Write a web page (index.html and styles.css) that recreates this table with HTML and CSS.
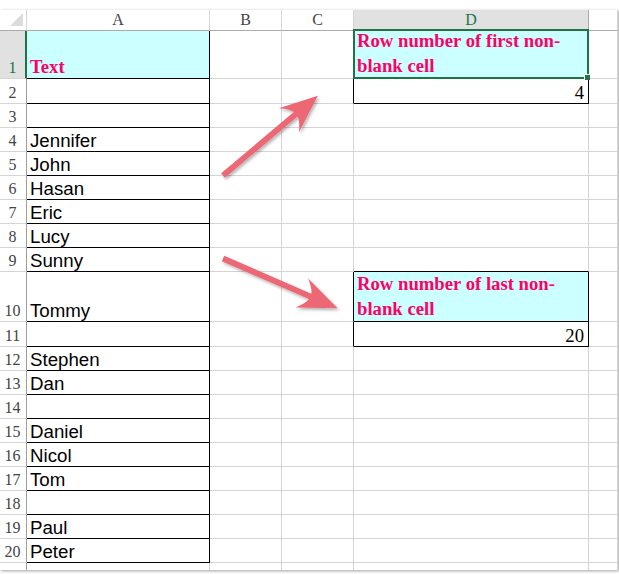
FILE: index.html
```html
<!DOCTYPE html>
<html>
<head>
<meta charset="utf-8">
<link rel="stylesheet" href="styles.css">
</head>
<body>
<div class="frame">
  <div class="sheet">
    <div class="corner"><span class="tri"></span></div>
    <div class="ch">A</div><div class="ch">B</div><div class="ch">C</div><div class="ch sel">D</div><div class="ch"></div>

    <div class="rh sel">1</div><div class="c a a1">Text</div><div class="c"></div><div class="c"></div><div class="c d1 hl">Row number of first non-blank cell<span class="handle"></span></div><div class="c"></div>
    <div class="rh">2</div><div class="c a"></div><div class="c"></div><div class="c bkr"></div><div class="c box num">4</div><div class="c"></div>
    <div class="rh">3</div><div class="c a"></div><div class="c"></div><div class="c"></div><div class="c"></div><div class="c"></div>
    <div class="rh">4</div><div class="c a">Jennifer</div><div class="c"></div><div class="c"></div><div class="c"></div><div class="c"></div>
    <div class="rh">5</div><div class="c a">John</div><div class="c"></div><div class="c"></div><div class="c"></div><div class="c"></div>
    <div class="rh">6</div><div class="c a">Hasan</div><div class="c"></div><div class="c"></div><div class="c"></div><div class="c"></div>
    <div class="rh">7</div><div class="c a">Eric</div><div class="c"></div><div class="c"></div><div class="c"></div><div class="c"></div>
    <div class="rh">8</div><div class="c a">Lucy</div><div class="c"></div><div class="c"></div><div class="c"></div><div class="c"></div>
    <div class="rh">9</div><div class="c a">Sunny</div><div class="c"></div><div class="c"></div><div class="c bkb"></div><div class="c"></div>
    <div class="rh">10</div><div class="c a">Tommy</div><div class="c"></div><div class="c bkr"></div><div class="c box hl">Row number of last non-blank cell</div><div class="c"></div>
    <div class="rh">11</div><div class="c a"></div><div class="c"></div><div class="c bkr"></div><div class="c box num">20</div><div class="c"></div>
    <div class="rh">12</div><div class="c a">Stephen</div><div class="c"></div><div class="c"></div><div class="c"></div><div class="c"></div>
    <div class="rh">13</div><div class="c a">Dan</div><div class="c"></div><div class="c"></div><div class="c"></div><div class="c"></div>
    <div class="rh">14</div><div class="c a"></div><div class="c"></div><div class="c"></div><div class="c"></div><div class="c"></div>
    <div class="rh">15</div><div class="c a">Daniel</div><div class="c"></div><div class="c"></div><div class="c"></div><div class="c"></div>
    <div class="rh">16</div><div class="c a">Nicol</div><div class="c"></div><div class="c"></div><div class="c"></div><div class="c"></div>
    <div class="rh">17</div><div class="c a">Tom</div><div class="c"></div><div class="c"></div><div class="c"></div><div class="c"></div>
    <div class="rh">18</div><div class="c a"></div><div class="c"></div><div class="c"></div><div class="c"></div><div class="c"></div>
    <div class="rh">19</div><div class="c a">Paul</div><div class="c"></div><div class="c"></div><div class="c"></div><div class="c"></div>
    <div class="rh">20</div><div class="c a">Peter</div><div class="c"></div><div class="c"></div><div class="c"></div><div class="c"></div>
    <div class="rh">21</div><div class="c"></div><div class="c"></div><div class="c"></div><div class="c"></div><div class="c"></div>
  </div>
</div>
<svg class="arrows" width="619" height="574" viewBox="0 0 619 574" xmlns="http://www.w3.org/2000/svg">
  <defs>
    <filter id="sh" x="-20%" y="-20%" width="140%" height="140%">
      <feDropShadow dx="1.5" dy="2" stdDeviation="1.6" flood-color="#000" flood-opacity="0.3"/>
    </filter>
  </defs>
  <g filter="url(#sh)" fill="#ec6775">
    <path transform="translate(223,175.5) rotate(-40.1)" d="M0,-2.9 L95,-2.9 Q94,-8 86,-15.5 L124,0 L86,15.8 Q94,8 95,2.9 L0,2.9 Z"/>
    <path transform="translate(223,258.5) rotate(23.5)" d="M0,-2.9 L95,-2.9 Q94,-8 86,-15.6 L125,0 L86,16 Q94,8 95,2.9 L0,2.9 Z"/>
  </g>
</svg>
</body>
</html>
```

FILE: styles.css
```css
html, body {
  margin: 0;
  padding: 0;
  background: #ffffff;
}

.frame {
  padding-top: 10px;
  width: 619px;
  height: 564px;
}

.sheet {
  display: grid;
  grid-template-columns: 27px 183px 72px 72px 235px 29px;
  grid-template-rows: 21px 48px 25px repeat(7, 24px) 50px 25px repeat(9, 24px) 24px;
  width: 618px;
  height: 560px;
  overflow: hidden;
  background: #ffffff;
  box-shadow: 1px 1px 3px rgba(0, 0, 0, 0.38);
}

.corner {
  position: relative;
  border-right: 1px solid #d4d4d4;
  border-bottom: 1px solid #ababab;
}

.tri {
  position: absolute;
  right: 3px;
  bottom: 4px;
  width: 0;
  height: 0;
  border-left: 13px solid transparent;
  border-bottom: 13px solid #dcdcdc;
}

.ch {
  display: flex;
  align-items: center;
  justify-content: center;
  border-right: 1px solid #d4d4d4;
  border-bottom: 1px solid #ababab;
  font-family: "Liberation Serif", "Times New Roman", serif;
  font-size: 16px;
  line-height: 20px;
  color: #444444;
}

.ch.sel {
  background: #e1e1e1;
  color: #217346;
  border-right-color: #ababab;
}

.rh {
  display: flex;
  align-items: flex-end;
  justify-content: center;
  border-right: 1px solid #9e9e9e;
  border-bottom: 1px solid #d4d4d4;
  font-family: "Liberation Serif", "Times New Roman", serif;
  font-size: 16px;
  line-height: 21px;
  color: #444444;
  padding-right: 1px;
}

.rh.sel {
  background: #e1e1e1;
  color: #217346;
  border-right: 2px solid #217346;
  padding-right: 0;
}

.c {
  display: flex;
  align-items: flex-end;
  border-right: 1px solid #d4d4d4;
  border-bottom: 1px solid #d4d4d4;
  font-family: "Liberation Sans", Arial, sans-serif;
  font-size: 18.7px;
  line-height: 21px;
  color: #000000;
  padding-left: 3px;
  min-width: 0;
}

.a {
  border-right-color: #000000;
  border-bottom-color: #000000;
}

.a1 {
  background: #ccffff;
  font-family: "Liberation Serif", "Times New Roman", serif;
  font-weight: bold;
  color: #ff0066;
  line-height: 23px;
}

.hl {
  background: #ccffff;
  font-family: "Liberation Serif", "Times New Roman", serif;
  font-weight: bold;
  color: #ff0066;
  line-height: 25px;
  padding-right: 3px;
}

.d1 {
  position: relative;
  overflow: visible;
}

.d1::after {
  content: "";
  position: absolute;
  top: -2px;
  left: -1px;
  right: -1px;
  bottom: -1px;
  border: 2px solid #217346;
  pointer-events: none;
}

.handle {
  position: absolute;
  right: -2px;
  bottom: -2px;
  width: 5px;
  height: 5px;
  background: #217346;
  box-shadow: -1px -1px 0 #ffffff;
  z-index: 2;
}

.bkr {
  border-right-color: #000000;
}

.bkb {
  border-bottom-color: #000000;
}

.box {
  border-right-color: #000000;
  border-bottom-color: #000000;
}

.num {
  justify-content: flex-end;
  padding-right: 4px;
  font-family: "Liberation Serif", "Times New Roman", serif;
  line-height: 21px;
}

.arrows {
  position: absolute;
  top: 0;
  left: 0;
  pointer-events: none;
}
```
